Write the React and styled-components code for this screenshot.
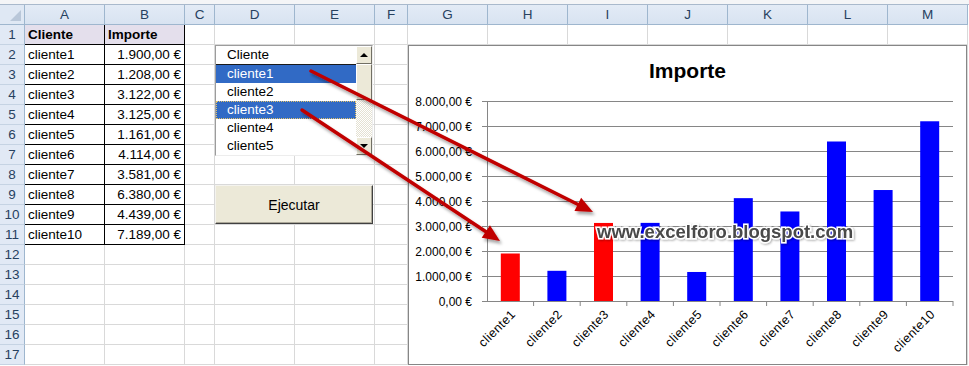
import React from "react";
import styled, { createGlobalStyle } from "styled-components";

const GlobalStyle = createGlobalStyle`
  html, body {
    margin: 0;
    padding: 0;
    background: #fff;
  }
  body {
    font-family: "Liberation Sans", Arial, sans-serif;
    overflow: hidden;
  }
`;

const COLUMNS = [
  ["A", 80], ["B", 80], ["C", 30], ["D", 80], ["E", 80], ["F", 33],
  ["G", 80], ["H", 80], ["I", 80], ["J", 80], ["K", 80], ["L", 80], ["M", 80],
];

const DATA = [
  ["cliente1", 1900, "1.900,00 €"],
  ["cliente2", 1208, "1.208,00 €"],
  ["cliente3", 3122, "3.122,00 €"],
  ["cliente4", 3125, "3.125,00 €"],
  ["cliente5", 1161, "1.161,00 €"],
  ["cliente6", 4114, "4.114,00 €"],
  ["cliente7", 3581, "3.581,00 €"],
  ["cliente8", 6380, "6.380,00 €"],
  ["cliente9", 4439, "4.439,00 €"],
  ["cliente10", 7189, "7.189,00 €"],
];

const SELECTED = ["cliente1", "cliente3"];
const ROWS = 17;

const Sheet = styled.div`
  position: relative;
  width: 969px;
  height: 366px;
  overflow: hidden;
  background: #fff;
`;

const TopStrip = styled.div`
  height: 4px;
  background: #f4f5f7;
  border-bottom: 1px solid #a9b9cc;
`;

const Grid = styled.div`
  display: grid;
  grid-template-columns: 25px ${COLUMNS.map(([, w]) => `${w}px`).join(" ")};
  grid-auto-rows: 20px;
`;

const Corner = styled.div`
  position: relative;
  box-sizing: border-box;
  background: #dfe8f4;
  border-right: 1px solid #9eb6ce;
  border-bottom: 1px solid #9eb6ce;

  &::after {
    content: "";
    position: absolute;
    right: 3px;
    bottom: 3px;
    border-style: solid;
    border-width: 0 0 11px 11px;
    border-color: transparent transparent #b9c7d9 transparent;
  }
`;

const ColHead = styled.div`
  box-sizing: border-box;
  background: linear-gradient(#e3ebf6, #d8e3f1);
  border-right: 1px solid #9eb6ce;
  border-bottom: 1px solid #9eb6ce;
  color: #27415f;
  font-size: 13.5px;
  line-height: 19px;
  text-align: center;
`;

const RowHead = styled.div`
  box-sizing: border-box;
  background: #e1e9f5;
  border-right: 1px solid #9eb6ce;
  border-bottom: 1px solid #c5d3e3;
  color: #27415f;
  font-size: 13.5px;
  line-height: 19px;
  text-align: center;
`;

const Cell = styled.div`
  box-sizing: border-box;
  border-right: 1px solid ${({ $boxed }) => ($boxed ? "#000" : "#d9d9d9")};
  border-bottom: 1px solid ${({ $boxed }) => ($boxed ? "#000" : "#d9d9d9")};
  background: ${({ $fill }) => $fill || "#fff"};
  padding: 0 3px;
  color: #000;
  font-size: 13.5px;
  font-weight: ${({ $bold }) => ($bold ? 700 : 400)};
  line-height: 20px;
  text-align: ${({ $align }) => $align || "left"};
  white-space: nowrap;
  overflow: hidden;
`;

const ListBox = styled.div`
  position: absolute;
  left: 215px;
  top: 45px;
  width: 158px;
  height: 111px;
  box-sizing: border-box;
  display: flex;
  background: #fff;
  border: 1px solid;
  border-color: #9c9c9c #ededed #ededed #9c9c9c;
`;

const Items = styled.div`
  flex: 1;
  display: flex;
  flex-direction: column;
`;

const Item = styled.div`
  height: ${({ $header }) => ($header ? "19px" : "18px")};
  box-sizing: border-box;
  padding-left: 11px;
  font-size: 13.5px;
  line-height: 18px;
  color: ${({ $selected }) => ($selected ? "#fff" : "#000")};
  background: ${({ $selected }) => ($selected ? "#316ac5" : "transparent")};
  outline: ${({ $focus }) => ($focus ? "1px dotted #e2c26a" : "none")};
  outline-offset: -1px;
  border-bottom: ${({ $header }) => ($header ? "1px solid #1a1a1a" : "none")};
`;

const ScrollBar = styled.div`
  width: 16px;
  display: flex;
  flex-direction: column;
`;

const ScrollButton = styled.div`
  height: 18px;
  box-sizing: border-box;
  background: #ece9d8;
  border: 1px solid;
  border-color: #fff #716f64 #716f64 #fff;
  display: flex;
  align-items: center;
  justify-content: center;

  &::after {
    content: "";
    border-left: 4px solid transparent;
    border-right: 4px solid transparent;
    ${({ $down }) =>
      $down ? "border-top: 4px solid #000;" : "border-bottom: 4px solid #000;"}
  }
`;

const Thumb = styled.div`
  height: 36px;
  box-sizing: border-box;
  background: #ece9d8;
  border: 1px solid;
  border-color: #fff #716f64 #716f64 #fff;
`;

const Track = styled.div`
  flex: 1;
  background-color: #fff;
  background-image: repeating-conic-gradient(#e4e1d2 0 25%, #fff 0 50%);
  background-size: 2px 2px;
`;

const RunButton = styled.div`
  position: absolute;
  left: 215px;
  top: 185px;
  width: 158px;
  height: 39px;
  box-sizing: border-box;
  background: #ece9d8;
  border: 1px solid;
  border-color: #f4f3ee #404040 #404040 #f4f3ee;
  box-shadow: inset -1px -1px 0 #aca899;
  display: flex;
  align-items: center;
  justify-content: center;
  color: #000;
  font-size: 14px;
`;

const ChartFrame = styled.div`
  position: absolute;
  left: 408px;
  top: 45px;
  width: 559px;
  height: 320px;
  box-sizing: border-box;
  background: #fff;
  border: 1px solid #868686;
`;

const Overlay = styled.svg`
  position: absolute;
  left: 0;
  top: 0;
  pointer-events: none;
`;

// plot geometry, page coordinates
const PLOT = { left: 487, right: 953, top: 101, base: 301 };
const CAT = (PLOT.right - PLOT.left) / DATA.length;
const yFor = (v) => PLOT.base - (v / 8000) * (PLOT.base - PLOT.top);
const AXIS = [8000, 7000, 6000, 5000, 4000, 3000, 2000, 1000, 0];
const AXIS_LABEL = (v) =>
  v === 0 ? "0,00 €" : `${(v / 1000).toFixed(0)}.000,00 €`;

const Chart = () => (
  <ChartFrame>
    <svg width="557" height="318" viewBox="409 46 557 318">
      <text
        x="687.5"
        y="78"
        textAnchor="middle"
        fontFamily="Liberation Sans, Arial, sans-serif"
        fontSize="21"
        fontWeight="700"
        fill="#000"
      >
        Importe
      </text>
      {AXIS.map((v) => {
        const y = yFor(v) + 0.5;
        return (
          <g key={v}>
            <line x1={PLOT.left - 5} x2={PLOT.right} y1={y} y2={y} stroke="#868686" />
            <text
              x="472"
              y={y + 4}
              textAnchor="end"
              fontFamily="Liberation Sans, Arial, sans-serif"
              fontSize="12"
              fill="#000"
            >
              {AXIS_LABEL(v)}
            </text>
          </g>
        );
      })}
      <line x1={PLOT.left + 0.5} x2={PLOT.left + 0.5} y1={PLOT.top} y2={PLOT.base} stroke="#868686" />
      {DATA.map(([name, value], i) => {
        const cx = PLOT.left + CAT * (i + 0.5);
        const tx = PLOT.left + CAT * (i + 1);
        const top = yFor(value);
        return (
          <g key={name}>
            <rect
              x={cx - 9.5}
              y={top}
              width="19"
              height={PLOT.base - top}
              fill={SELECTED.includes(name) ? "#ff0000" : "#0000ff"}
            />
            <line x1={tx} x2={tx} y1={PLOT.base} y2={PLOT.base + 5} stroke="#868686" />
            <text
              x={cx + 6}
              y={315}
              transform={`rotate(-45 ${cx + 6} 315)`}
              textAnchor="end"
              fontFamily="Liberation Sans, Arial, sans-serif"
              fontSize="12.5"
              letterSpacing="0.4"
              fill="#000"
            >
              {name}
            </text>
          </g>
        );
      })}
    </svg>
  </ChartFrame>
);

const Arrow = ({ from, to }) => {
  const [x1, y1] = from;
  const [x2, y2] = to;
  const d = Math.hypot(x2 - x1, y2 - y1);
  const ux = (x2 - x1) / d;
  const uy = (y2 - y1) / d;
  const len = 17;
  const half = 7.5;
  const bx = x2 - ux * len;
  const by = y2 - uy * len;
  const head = `${x2},${y2} ${bx - uy * half},${by + ux * half} ${bx + uy * half},${by - ux * half}`;
  return (
    <g filter="url(#shadow)">
      <line x1={x1} y1={y1} x2={bx + ux * 2} y2={by + uy * 2} stroke="#c00000" strokeWidth="3.5" strokeLinecap="round" />
      <polygon points={head} fill="#c00000" />
    </g>
  );
};

const cellFor = (col, r) => {
  const key = `${col}${r}`;
  const record = DATA[r - 2];
  if (r === 1 && col === "A")
    return <Cell key={key} $boxed $bold $fill="#e4dfec">Cliente</Cell>;
  if (r === 1 && col === "B")
    return <Cell key={key} $boxed $bold $fill="#e4dfec">Importe</Cell>;
  if (record && col === "A") return <Cell key={key} $boxed>{record[0]}</Cell>;
  if (record && col === "B")
    return <Cell key={key} $boxed $align="right">{record[2]}</Cell>;
  return <Cell key={key} />;
};

const App = () => {
  const rowNumbers = Array.from({ length: ROWS }, (_, i) => i + 1);

  return (
    <>
      <GlobalStyle />
      <Sheet>
        <TopStrip />
        <Grid>
          <Corner />
          {COLUMNS.map(([col]) => (
            <ColHead key={col}>{col}</ColHead>
          ))}
          {rowNumbers.map((r) => (
            <React.Fragment key={r}>
              <RowHead>{r}</RowHead>
              {COLUMNS.map(([col]) => cellFor(col, r))}
            </React.Fragment>
          ))}
        </Grid>

        <ListBox>
          <Items>
            <Item $header>Cliente</Item>
            {DATA.slice(0, 5).map(([name]) => (
              <Item
                key={name}
                $selected={SELECTED.includes(name)}
                $focus={name === "cliente3"}
              >
                {name}
              </Item>
            ))}
          </Items>
          <ScrollBar>
            <ScrollButton />
            <Thumb />
            <Track />
            <ScrollButton $down />
          </ScrollBar>
        </ListBox>

        <RunButton>Ejecutar</RunButton>

        <Chart />

        <Overlay width="969" height="366">
          <defs>
            <filter id="shadow" x="-10%" y="-10%" width="130%" height="130%">
              <feDropShadow dx="2" dy="3" stdDeviation="1.6" floodColor="#000" floodOpacity="0.35" />
            </filter>
            <filter id="soft" x="-5%" y="-20%" width="110%" height="150%">
              <feDropShadow dx="1" dy="1" stdDeviation="0.8" floodColor="#000" floodOpacity="0.35" />
            </filter>
          </defs>
          <Arrow from={[311, 71]} to={[593, 212]} />
          <Arrow from={[302, 110]} to={[500, 241]} />
          <text
            x="597"
            y="237.5"
            fontFamily="Liberation Sans, Arial, sans-serif"
            fontSize="18.5"
            fontWeight="700"
            fill="#484848"
            stroke="#fff"
            strokeWidth="3"
            paintOrder="stroke"
            filter="url(#soft)"
          >
            www.excelforo.blogspot.com
          </text>
        </Overlay>
      </Sheet>
    </>
  );
};

export default App;
